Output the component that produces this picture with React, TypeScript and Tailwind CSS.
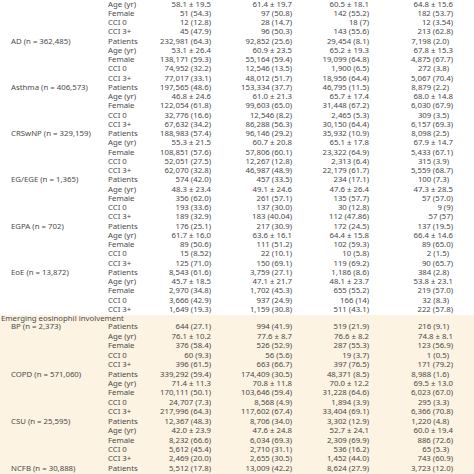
type Row = [string, string, string, string, string];

interface Group {
  label: string;
  rows: Row[];
}

// top of the table is cut off, first group has no visible label
const mainGroups: Group[] = [
  {
    label: '',
    rows: [
      ['Age (yr)', '58.1 ± 19.5', '61.4 ± 19.7', '60.5 ± 18.1', '64.8 ± 15.6'],
      ['Female', '51 (54.3)', '97 (50.8)', '142 (55.2)', '182 (53.7)'],
      ['CCI 0', '12 (12.8)', '28 (14.7)', '18 (7)', '12 (3.54)'],
      ['CCI 3+', '45 (47.9)', '96 (50.3)', '143 (55.6)', '213 (62.8)'],
    ],
  },
  {
    label: 'AD (n = 362,485)',
    rows: [
      ['Patients', '232,981 (64.3)', '92,852 (25.6)', '29,454 (8.1)', '7,198 (2.0)'],
      ['Age (yr)', '53.1 ± 26.4', '60.9 ± 23.5', '65.2 ± 19.3', '67.8 ± 15.3'],
      ['Female', '138,171 (59.3)', '55,164 (59.4)', '19,099 (64.8)', '4,875 (67.7)'],
      ['CCI 0', '74,952 (32.2)', '12,546 (13.5)', '1,900 (6.5)', '272 (3.8)'],
      ['CCI 3+', '77,017 (33.1)', '48,012 (51.7)', '18,956 (64.4)', '5,067 (70.4)'],
    ],
  },
  {
    label: 'Asthma (n = 406,573)',
    rows: [
      ['Patients', '197,565 (48.6)', '153,334 (37.7)', '46,795 (11.5)', '8,879 (2.2)'],
      ['Age (yr)', '46.8 ± 24.6', '61.0 ± 21.3', '65.7 ± 17.4', '68.0 ± 14.8'],
      ['Female', '122,054 (61.8)', '99,603 (65.0)', '31,448 (67.2)', '6,030 (67.9)'],
      ['CCI 0', '32,776 (16.6)', '12,546 (8.2)', '2,465 (5.3)', '309 (3.5)'],
      ['CCI 3+', '67,632 (34.2)', '86,288 (56.3)', '30,150 (64.4)', '6,157 (69.3)'],
    ],
  },
  {
    label: 'CRSwNP (n = 329,159)',
    rows: [
      ['Patients', '188,983 (57.4)', '96,146 (29.2)', '35,932 (10.9)', '8,098 (2.5)'],
      ['Age (yr)', '55.3 ± 21.5', '60.7 ± 20.8', '65.1 ± 17.8', '67.9 ± 14.7'],
      ['Female', '108,851 (57.6)', '57,806 (60.1)', '23,322 (64.9)', '5,433 (67.1)'],
      ['CCI 0', '52,051 (27.5)', '12,267 (12.8)', '2,313 (6.4)', '315 (3.9)'],
      ['CCI 3+', '62,070 (32.8)', '46,987 (48.9)', '22,179 (61.7)', '5,559 (68.7)'],
    ],
  },
  {
    label: 'EG/EGE (n = 1,365)',
    rows: [
      ['Patients', '574 (42.0)', '457 (33.5)', '234 (17.1)', '100 (7.3)'],
      ['Age (yr)', '48.3 ± 23.4', '49.1 ± 24.6', '47.6 ± 26.4', '47.3 ± 28.5'],
      ['Female', '356 (62.0)', '261 (57.1)', '135 (57.7)', '57 (57.0)'],
      ['CCI 0', '193 (33.6)', '137 (30.0)', '30 (12.8)', '9 (9)'],
      ['CCI 3+', '189 (32.9)', '183 (40.04)', '112 (47.86)', '57 (57)'],
    ],
  },
  {
    label: 'EGPA (n = 702)',
    rows: [
      ['Patients', '176 (25.1)', '217 (30.9)', '172 (24.5)', '137 (19.5)'],
      ['Age (yr)', '61.7 ± 16.0', '63.6 ± 16.1', '64.4 ± 15.8', '66.4 ± 14.6'],
      ['Female', '89 (50.6)', '111 (51.2)', '102 (59.3)', '89 (65.0)'],
      ['CCI 0', '15 (8.52)', '22 (10.1)', '10 (5.8)', '2 (1.5)'],
      ['CCI 3+', '125 (71.0)', '150 (69.1)', '119 (69.2)', '90 (65.7)'],
    ],
  },
  {
    label: 'EoE (n = 13,872)',
    rows: [
      ['Patients', '8,543 (61.6)', '3,759 (27.1)', '1,186 (8.6)', '384 (2.8)'],
      ['Age (yr)', '45.7 ± 18.5', '47.1 ± 21.7', '48.1 ± 23.7', '53.8 ± 23.1'],
      ['Female', '2,970 (34.8)', '1,702 (45.3)', '655 (55.2)', '219 (57.0)'],
      ['CCI 0', '3,666 (42.9)', '937 (24.9)', '166 (14)', '32 (8.3)'],
      ['CCI 3+', '1,649 (19.3)', '1,159 (30.8)', '511 (43.1)', '222 (57.8)'],
    ],
  },
];

const emergingGroups: Group[] = [
  {
    label: 'BP (n = 2,373)',
    rows: [
      ['Patients', '644 (27.1)', '994 (41.9)', '519 (21.9)', '216 (9.1)'],
      ['Age (yr)', '76.1 ± 10.2', '77.6 ± 8.7', '76.6 ± 8.2', '74.8 ± 8.1'],
      ['Female', '376 (58.4)', '526 (52.9)', '287 (55.3)', '123 (56.9)'],
      ['CCI 0', '60 (9.3)', '56 (5.6)', '19 (3.7)', '1 (0.5)'],
      ['CCI 3+', '396 (61.5)', '663 (66.7)', '397 (76.5)', '171 (79.2)'],
    ],
  },
  {
    label: 'COPD (n = 571,060)',
    rows: [
      ['Patients', '339,292 (59.4)', '174,409 (30.5)', '48,371 (8.5)', '8,988 (1.6)'],
      ['Age (yr)', '71.4 ± 11.3', '70.8 ± 11.8', '70.0 ± 12.2', '69.5 ± 13.0'],
      ['Female', '170,111 (50.1)', '103,646 (59.4)', '31,228 (64.6)', '6,023 (67.0)'],
      ['CCI 0', '24,707 (7.3)', '8,568 (4.9)', '1,894 (3.9)', '295 (3.3)'],
      ['CCI 3+', '217,996 (64.3)', '117,602 (67.4)', '33,404 (69.1)', '6,366 (70.8)'],
    ],
  },
  {
    label: 'CSU (n = 25,595)',
    rows: [
      ['Patients', '12,367 (48.3)', '8,706 (34.0)', '3,302 (12.9)', '1,220 (4.8)'],
      ['Age (yr)', '42.0 ± 23.9', '47.6 ± 24.8', '52.7 ± 24.1', '60.0 ± 19.4'],
      ['Female', '8,232 (66.6)', '6,034 (69.3)', '2,309 (69.9)', '886 (72.6)'],
      ['CCI 0', '5,612 (45.4)', '2,710 (31.1)', '536 (16.2)', '65 (5.3)'],
      ['CCI 3+', '2,469 (20.0)', '2,655 (30.5)', '1,452 (44.0)', '743 (60.9)'],
    ],
  },
  {
    label: 'NCFB (n = 30,888)',
    rows: [['Patients', '5,512 (17.8)', '13,009 (42.2)', '8,624 (27.9)', '3,723 (12.0)']],
  },
];

const cols = 'grid grid-cols-[108px_42px_61px_81px_77px_84px_1fr] items-center';

// single-digit percentages sit a bit left in the last column
const lastPad = (v: string) => (/\(\d\.\d\)$/.test(v) ? 'pr-[4px]' : '');

function GroupRows({ group, rowH }: { group: Group; rowH: string }) {
  return (
    <>
      {group.rows.map((r, i) => (
        <div key={i} className={`${cols} ${rowH}`}>
          <div className="pl-[11px] whitespace-nowrap">{i === 0 ? group.label : ''}</div>
          <div className="whitespace-nowrap">{r[0]}</div>
          <div className="text-right whitespace-nowrap">{r[1]}</div>
          <div className="text-right whitespace-nowrap">{r[2]}</div>
          <div className="text-right whitespace-nowrap">{r[3]}</div>
          <div className={`text-right whitespace-nowrap ${lastPad(r[4])}`}>{r[4]}</div>
          <div />
        </div>
      ))}
    </>
  );
}

export default function App() {
  return (
    <div
      className="w-[474px] h-[474px] overflow-hidden bg-white text-[#4a4a4a] text-[7.8px] leading-none"
      style={{ fontFamily: '"Noto Sans", "Open Sans", sans-serif' }}
    >
      <div>
        {mainGroups.map((g, i) => (
          <GroupRows key={i} group={g} rowH="h-[9.25px]" />
        ))}
      </div>

      {/* Emerging eosinophil involvement */}
      <div className="bg-[#fdf3e2]">
        <div className="h-[8px] flex items-center pl-[1px] whitespace-nowrap">Emerging eosinophil involvement</div>
        {emergingGroups.map((g, i) => (
          <GroupRows key={i} group={g} rowH="h-[9.45px]" />
        ))}
      </div>
    </div>
  );
}
